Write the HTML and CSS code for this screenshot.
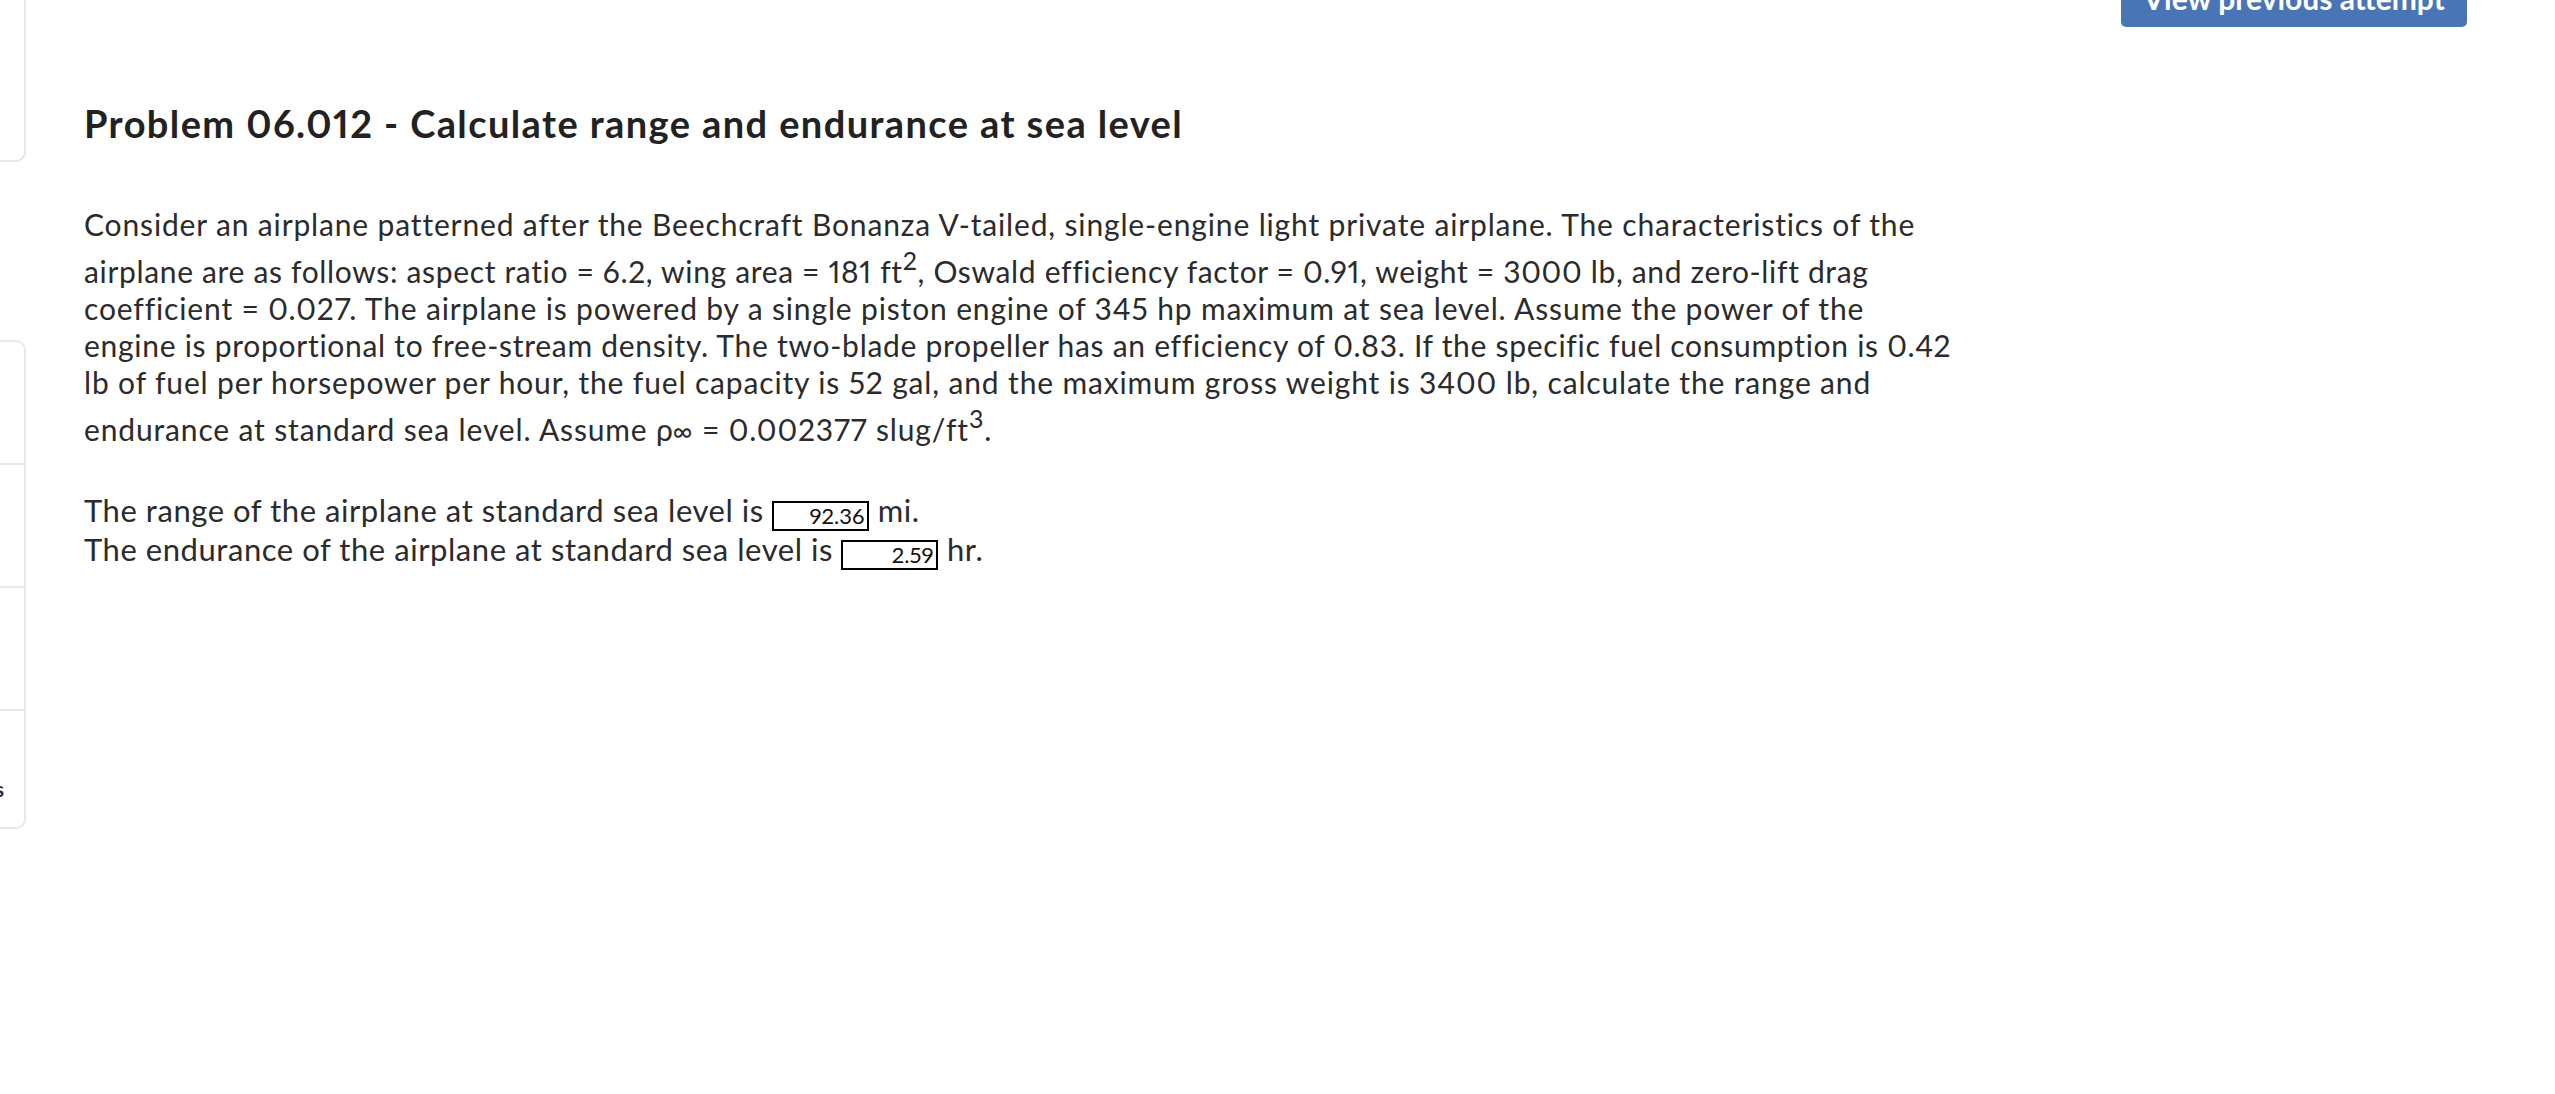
FILE: index.html
```html
<!DOCTYPE html>
<html lang="en">
<head>
<meta charset="utf-8">
<title>Problem 06.012</title>
<link rel="stylesheet" href="styles.css">
</head>
<body>
<div class="page">
  <aside class="sidebar">
    <div class="side-card side-card-top"></div>
    <nav class="side-card side-nav">
      <div class="nav-item"></div>
      <div class="nav-item"></div>
      <div class="nav-item"></div>
      <div class="nav-item nav-item-last"><span class="nav-label">References</span></div>
    </nav>
  </aside>
  <main class="content">
    <div class="topbar">
      <button class="btn-prev" type="button">View previous attempt</button>
    </div>
    <h1 class="problem-title">Problem 06.012 - Calculate range and endurance at sea level</h1>
    <p class="problem-text">
      <span class="line">Consider an airplane patterned after the Beechcraft Bonanza V-tailed, single-engine light private airplane. The characteristics of the</span>
      <span class="line tall tighter">airplane are as follows: aspect ratio = 6.2, wing area = 181 ft<sup>2</sup>, Oswald efficiency factor = 0.91, weight = 3000 lb, and zero-lift drag</span>
      <span class="line">coefficient = 0.027. The airplane is powered by a single piston engine of 345 hp maximum at sea level. Assume the power of the</span>
      <span class="line tight">engine is proportional to free-stream density. The two-blade propeller has an efficiency of 0.83. If the specific fuel consumption is 0.42</span>
      <span class="line">lb of fuel per horsepower per hour, the fuel capacity is 52 gal, and the maximum gross weight is 3400 lb, calculate the range and</span>
      <span class="line tall">endurance at standard sea level. Assume ρ<span class="inf">∞</span> = 0.002377 slug/ft<sup>3</sup>.</span>
    </p>
    <div class="answers">
      <div class="answer-line">The range of the airplane at standard sea level is <span class="answer-box">92.36</span> mi.</div>
      <div class="answer-line">The endurance of the airplane at standard sea level is <span class="answer-box">2.59</span> hr.</div>
    </div>
  </main>
</div>
</body>
</html>
```

FILE: styles.css
```css
html, body {
  margin: 0;
  padding: 0;
  background: #ffffff;
}

body {
  font-family: Lato, "Open Sans", Arial, sans-serif;
  font-variant-numeric: proportional-nums;
  color: #2b2b2b;
  overflow: hidden;
}

.page {
  display: flex;
  align-items: flex-start;
  width: 2555px;
  height: 1094px;
}

.sidebar {
  flex: 0 0 320px;
  margin-left: -294px;
  display: flex;
  flex-direction: column;
}

.side-card {
  border: 2px solid #e8e8e8;
  border-radius: 10px;
  background: #fff;
}

.side-card-top {
  height: 258px;
  margin-top: -100px;
}

.side-nav {
  margin-top: 178px;
  display: flex;
  flex-direction: column;
}

.nav-item {
  height: 121px;
  border-bottom: 2px solid #e8e8e8;
  display: flex;
  align-items: flex-end;
  justify-content: flex-end;
}

.nav-item-last {
  border-bottom: none;
  height: 116px;
}

.nav-label {
  font-weight: 700;
  font-size: 20px;
  color: #2b2b2b;
  padding-right: 20px;
  padding-bottom: 26px;
}

.content {
  flex: 1 1 auto;
  padding-left: 58px;
  display: flex;
  flex-direction: column;
}

.topbar {
  display: flex;
  justify-content: flex-end;
  padding-right: 88px;
  margin-top: -29px;
}

.btn-prev {
  height: 56px;
  width: 346px;
  border: none;
  border-radius: 5px;
  background: #4a75b5;
  color: #ffffff;
  font-family: Lato, Arial, sans-serif;
  font-weight: 700;
  font-size: 30px;
  padding: 0 0 14px 0;
  line-height: 1;
  display: flex;
  align-items: flex-end;
  justify-content: center;
}

.problem-title {
  margin: 73px 0 0 0;
  font-size: 38px;
  font-weight: 700;
  line-height: 46px;
  letter-spacing: 1.4px;
  color: #222222;
}

.problem-text {
  margin: 60px 0 0 0;
  font-size: 30px;
  line-height: 37px;
  letter-spacing: 0.85px;
  color: #2b2b2b;
}

.line {
  display: block;
  white-space: nowrap;
}

.line.tall {
  padding-top: 10px;
}

.line.tight {
  letter-spacing: 0.72px;
}

.line.tighter {
  letter-spacing: 0.66px;
}

.problem-text sup {
  font-size: 25px;
  line-height: 0;
  vertical-align: 13px;
}

.problem-text .inf {
  font-size: 27px;
  margin-left: -1px;
}

.answers {
  margin-top: 43px;
  font-size: 31px;
  line-height: 36px;
  letter-spacing: 0.55px;
}

.answer-line {
  white-space: nowrap;
}

.answer-box {
  display: inline-block;
  box-sizing: border-box;
  width: 97px;
  height: 30px;
  border: 2px solid #000000;
  text-align: right;
  font-size: 22px;
  line-height: 26px;
  letter-spacing: 0;
  padding-right: 3px;
  color: #111111;
  vertical-align: -2px;
}
```
